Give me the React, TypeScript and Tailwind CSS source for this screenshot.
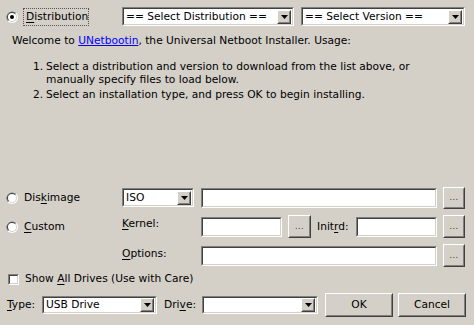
import React from "react";

type P = { className?: string; innerClass?: string; children?: React.ReactNode };

function Sunken({ className = "", innerClass = "", children }: P) {
  return (
    <div className={`border border-t-[#808080] border-l-[#808080] border-b-white border-r-white ${className}`}>
      <div className={`h-full w-full border border-t-[#404040] border-l-[#404040] border-b-[#d4d0c8] border-r-[#d4d0c8] bg-white ${innerClass}`}>
        {children}
      </div>
    </div>
  );
}

function Raised({ className = "", innerClass = "", children }: P) {
  return (
    <div className={`border border-t-white border-l-white border-b-[#404040] border-r-[#404040] bg-[#d4d0c8] ${className}`}>
      <div className={`h-full w-full border border-t-[#d4d0c8] border-l-[#d4d0c8] border-b-[#808080] border-r-[#808080] flex items-center justify-center ${innerClass}`}>
        {children}
      </div>
    </div>
  );
}

function Arrow() {
  return (
    <Raised className="w-[14px] h-[14px] shrink-0">
      <svg width="7" height="4" viewBox="0 0 7 4">
        <path d="M0 0 H7 L3.5 4 Z" fill="#000" />
      </svg>
    </Raised>
  );
}

function Combo({ className = "", text = "" }: { className?: string; text?: string }) {
  return (
    <Sunken className={className} innerClass="flex items-center pl-[2px] pr-[1px]">
      <span className="flex-1 whitespace-nowrap leading-[14px]">{text}</span>
      <Arrow />
    </Sunken>
  );
}

function Radio({ checked = false }: { checked?: boolean }) {
  return (
    <svg width="12" height="12" viewBox="0 0 12 12" className="shrink-0">
      <circle cx="6" cy="6" r="6" fill="#ffffff" />
      <path d="M10.24 1.76 A6 6 0 0 0 1.76 10.24 Z" fill="#808080" />
      <circle cx="6" cy="6" r="5" fill="#d4d0c8" />
      <path d="M9.54 2.46 A5 5 0 0 0 2.46 9.54 Z" fill="#404040" />
      <circle cx="6" cy="6" r="4" fill="#ffffff" />
      {checked && <circle cx="6" cy="6" r="2" fill="#000000" />}
    </svg>
  );
}

function Dots({ className = "" }: { className?: string }) {
  return (
    <Raised className={className}>
      <span className="text-[8px] leading-none text-[#333] tracking-[0.5px]">...</span>
    </Raised>
  );
}

const U = ({ c }: { c: string }) => <span className="underline underline-offset-[2px]">{c}</span>;

export default function App() {
  return (
    <div className="w-[474px] h-[325px] bg-[#d4d0c8] text-black font-['DejaVu_Sans',sans-serif] text-[10.67px] flex flex-col overflow-hidden">
      {/* Top row */}
      <div className="flex items-center h-[19px] mt-[7px] pl-[6px]">
        <Radio checked />
        <div className="ml-[5px] h-[18px] w-[66px] border border-dotted border-[#555] flex items-center pl-[2px]">
          <span><U c="D" />istribution</span>
        </div>
        <Combo className="ml-[33px] w-[172px] h-[19px]" text="== Select Distribution ==" />
        <Combo className="ml-[7px] w-[164px] h-[19px]" text="== Select Version ==" />
      </div>

      {/* Welcome text */}
      <div className="pl-[12px] mt-[8px] leading-[14px]">
        Welcome to <span className="text-[#0000ff] underline">UNetbootin</span>, the Universal Netboot Installer. Usage:
      </div>
      <div className="mt-[12px] pl-[33px] leading-[13px] flex flex-col gap-[2px]">
        <div className="flex">
          <span className="w-[13px] shrink-0">1.</span>
          <span>Select a distribution and version to download from the list above, or<br />manually specify files to load below.</span>
        </div>
        <div className="flex">
          <span className="w-[13px] shrink-0">2.</span>
          <span>Select an installation type, and press OK to begin installing.</span>
        </div>
      </div>

      <div className="flex-1" />

      {/* Diskimage row */}
      <div className="flex items-center h-[23px] pl-[6px]">
        <div className="w-[116px] flex items-center">
          <Radio />
          <span className="ml-[6px]">Dis<U c="k" />image</span>
        </div>
        <Combo className="w-[72px] h-[19px]" text="ISO" />
        <Sunken className="ml-[7px] w-[236px] h-[20px]" />
        <Dots className="ml-[6px] w-[22px] h-[22px]" />
      </div>

      {/* Custom row */}
      <div className="flex items-center h-[23px] pl-[6px] mt-[6px]">
        <div className="w-[116px] flex items-center">
          <Radio />
          <span className="ml-[6px]"><U c="C" />ustom</span>
        </div>
        <span className="w-[79px] pb-[5px]"><U c="K" />ernel:</span>
        <Sunken className="w-[81px] h-[20px]" />
        <Dots className="ml-[6px] w-[23px] h-[23px]" />
        <span className="ml-[6px] w-[33px]">Init<U c="r" />d:</span>
        <Sunken className="ml-[6px] w-[81px] h-[20px]" />
        <Dots className="ml-[6px] w-[22px] h-[23px]" />
      </div>

      {/* Options row */}
      <div className="flex items-center h-[23px] pl-[6px] mt-[6px]">
        <div className="w-[116px]" />
        <span className="w-[79px] pb-[4px]"><U c="O" />ptions:</span>
        <Sunken className="w-[236px] h-[20px]" />
        <Dots className="ml-[6px] w-[22px] h-[23px]" />
      </div>

      {/* Checkbox row */}
      <div className="flex items-center h-[14px] pl-[8px] mt-[5px]">
        <Sunken className="w-[11px] h-[11px] shrink-0" />
        <span className="ml-[6px]">Show <U c="A" />ll Drives (Use with Care)</span>
      </div>

      {/* Bottom row */}
      <div className="flex items-center h-[24px] pl-[7px] mt-[7px] mb-[8px]">
        <span className="w-[35px]"><U c="T" />ype:</span>
        <Combo className="w-[115px] h-[18px]" text="USB Drive" />
        <span className="ml-[7px] w-[38px]">Dri<U c="v" />e:</span>
        <Combo className="w-[116px] h-[18px]" text="" />
        <Raised className="ml-[7px] w-[68px] h-[24px]">OK</Raised>
        <Raised className="ml-[5px] w-[68px] h-[24px]">Cancel</Raised>
      </div>
    </div>
  );
}
